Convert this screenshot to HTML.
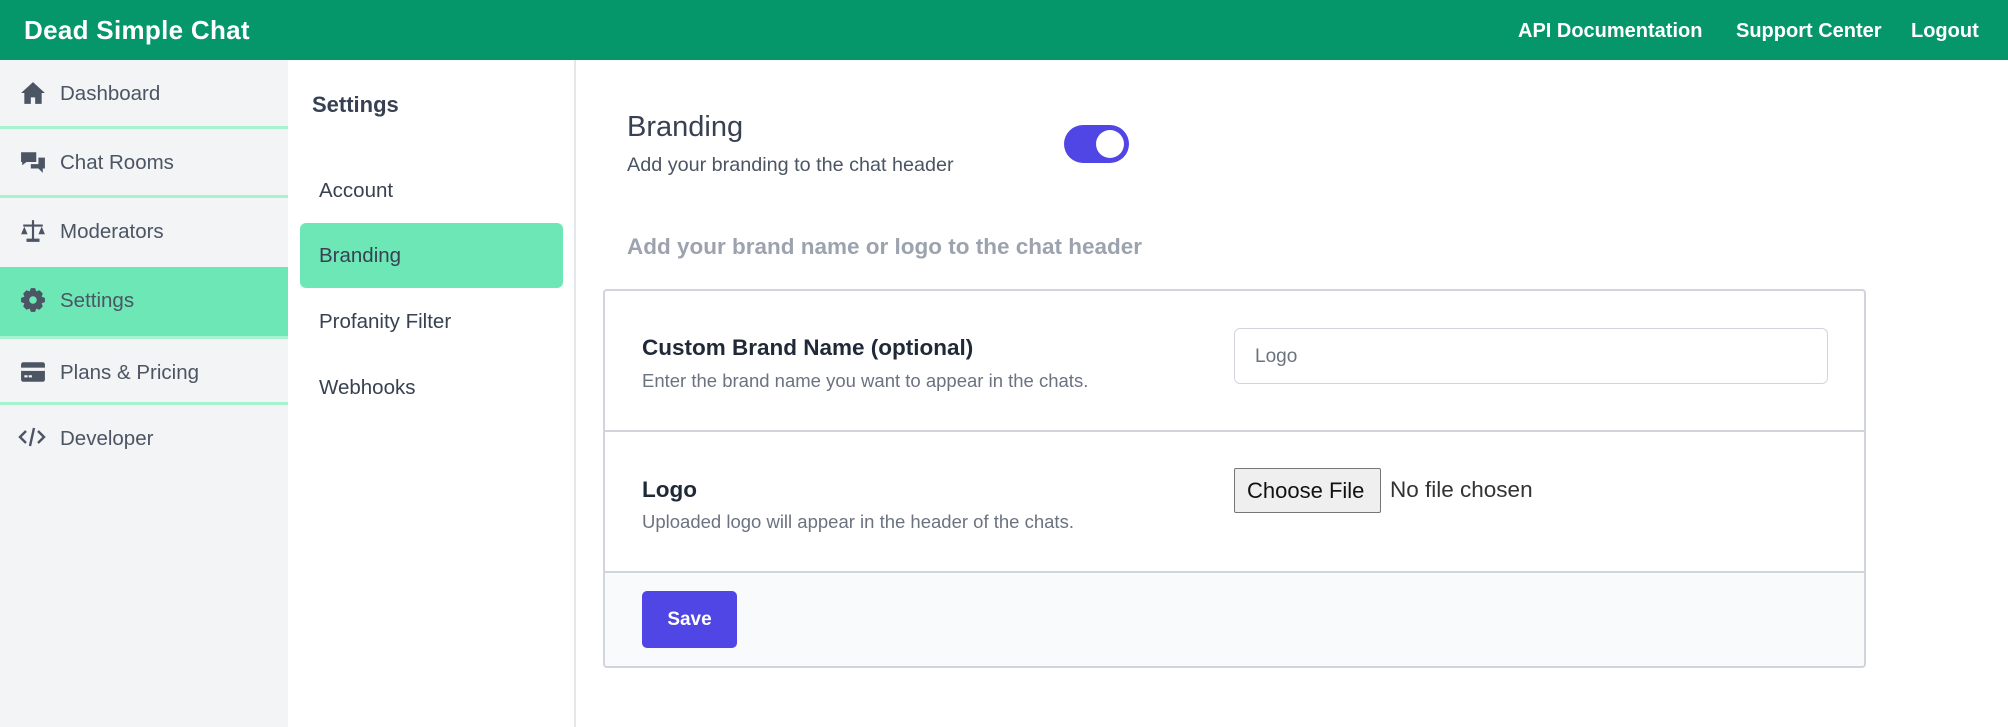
<!DOCTYPE html>
<html><head><meta charset="utf-8"><style>
*{box-sizing:border-box;margin:0;padding:0}
body{width:2008px;height:727px;overflow:hidden;font-family:"Liberation Sans",sans-serif;background:#fff;position:relative;color:#374151}
.hdr{position:absolute;left:0;top:0;width:2008px;height:60px;background:#059669;color:#fff}
.hdr .t{position:absolute;left:24px;top:15px;font-size:26px;font-weight:bold;letter-spacing:0.3px}
.hdr .l{position:absolute;top:20px;font-size:20px;font-weight:bold}
.side{position:absolute;left:0;top:60px;width:288px;height:667px;background:#f3f4f6}
.it{position:absolute;left:0;width:288px;height:66px;font-size:20.5px;color:#4b5563}
.it span{position:absolute;left:60px;top:22px}
.it svg{position:absolute;left:20px;top:20px}
.div{position:absolute;left:0;width:288px;height:3px;background:#a7f3d0}
.col2{position:absolute;left:288px;top:60px;width:288px;height:667px;border-right:2px solid #e5e7eb}
.s{position:absolute;font-size:20.5px;color:#374151}
.abs{position:absolute}
</style></head><body>
<div class="hdr"><div class="t">Dead Simple Chat</div>
<div class="l" style="left:1518px">API Documentation</div>
<div class="l" style="left:1736px">Support Center</div>
<div class="l" style="left:1911px">Logout</div></div>
<div class="side">
<div class="it" style="top:0"><svg width="26" height="26" viewBox="0 0 24 24"><path d="M12 2L1 12h3v10h6v-6h4v6h6V12h3z" fill="#4b5563"/></svg><span>Dashboard</span></div>
<div class="div" style="top:66px"></div>
<div class="it" style="top:69px"><svg width="26" height="26" viewBox="0 0 24 24"><path d="M1 3h14v9H6l-4 3v-3H1z M17 8h6v10h-2v4l-4-4h-7v-4h7z" fill="#4b5563"/></svg><span>Chat Rooms</span></div>
<div class="div" style="top:135px"></div>
<div class="it" style="top:138px"><svg width="26" height="26" viewBox="0 0 24 24"><path d="M11 2h2v17h5v3H6v-3h5z M3 6h18v2H3z M4 8l-3 7h6z M20 8l-3 7h6z" fill="#4b5563"/></svg><span>Moderators</span></div>
<div class="it" style="top:207px;background:#6ee7b7;height:69px"><svg width="26" height="26" viewBox="0 0 24 24"><path d="M10 1h4l1 3 3-1 3 3-1 3 3 1v4l-3 1 1 3-3 3-3-1-1 3h-4l-1-3-3 1-3-3 1-3-3-1v-4l3-1-1-3 3-3 3 1z" fill="#4b5563"/><circle cx="12" cy="12" r="3.5" fill="#6ee7b7"/></svg><span>Settings</span></div>
<div class="div" style="top:276px"></div>
<div class="it" style="top:279px"><svg width="26" height="26" viewBox="0 0 24 24"><rect x="1" y="3" width="22" height="18" rx="2" fill="#4b5563"/><rect x="1" y="8" width="22" height="3" fill="#f3f4f6"/><rect x="4" y="15" width="3" height="2" fill="#f3f4f6"/><rect x="8" y="15" width="3" height="2" fill="#f3f4f6"/></svg><span>Plans &amp; Pricing</span></div>
<div class="div" style="top:342px"></div>
<div class="it" style="top:345px"><svg width="28" height="24" viewBox="0 0 28 24" style="left:18px"><path d="M8 6L2 12l6 6M20 6l6 6-6 6M16 3l-4 18" stroke="#4b5563" stroke-width="2.4" fill="none"/></svg><span>Developer</span></div>
</div>
<div class="col2">
<div class="s" style="left:24px;top:32px;font-weight:bold;font-size:22px">Settings</div>
<div class="s" style="left:31px;top:119px">Account</div>
<div class="abs" style="left:12px;top:163px;width:263px;height:65px;background:#6ee7b7;border-radius:6px"></div>
<div class="s" style="left:31px;top:184px">Branding</div>
<div class="s" style="left:31px;top:250px">Profanity Filter</div>
<div class="s" style="left:31px;top:316px">Webhooks</div>
</div>
<div class="abs" style="left:627px;top:111px;font-size:29px;color:#374151">Branding</div>
<div class="abs" style="left:627px;top:154px;font-size:19.8px;color:#4b5563">Add your branding to the chat header</div>
<div class="abs" style="left:1064px;top:125px;width:65px;height:38px;border-radius:19px;background:#4f46e5"><div class="abs" style="left:32px;top:5px;width:28px;height:28px;border-radius:50%;background:#fff"></div></div>
<div class="abs" style="left:627px;top:234px;font-size:22.5px;font-weight:bold;color:#9ca3af">Add your brand name or logo to the chat header</div>
<div class="abs" style="left:603px;top:289px;width:1263px;height:379px;border:2px solid #d1d5db;border-radius:4px;overflow:hidden">
<div class="abs" style="left:0;top:139px;width:100%;height:2px;background:#d1d5db"></div>
<div class="abs" style="left:0;top:280px;width:100%;height:2px;background:#d1d5db"></div>
<div class="abs" style="left:0;top:282px;width:100%;height:95px;background:#f9fafb"></div>
<div class="abs" style="left:37px;top:44px;font-size:22.5px;font-weight:bold;color:#1f2937">Custom Brand Name (optional)</div>
<div class="abs" style="left:37px;top:79px;font-size:18.5px;color:#6b7280">Enter the brand name you want to appear in the chats.</div>
<div class="abs" style="left:629px;top:37px;width:594px;height:56px;border:1px solid #d1d5db;border-radius:6px;background:#fff"><span class="abs" style="left:20px;top:17px;font-size:19px;color:#6b7280">Logo</span></div>
<div class="abs" style="left:37px;top:186px;font-size:22.5px;font-weight:bold;color:#1f2937">Logo</div>
<div class="abs" style="left:37px;top:220px;font-size:18.5px;color:#6b7280">Uploaded logo will appear in the header of the chats.</div>
<div class="abs" style="left:629px;top:177px;width:147px;height:45px;border:1px solid #767676;border-radius:2px;background:#efefef;font-size:22px;color:#111;padding:9px 0 0 12px">Choose File</div>
<div class="abs" style="left:785px;top:186px;font-size:22.5px;color:#333">No file chosen</div>
<div class="abs" style="left:37px;top:300px;width:95px;height:57px;border-radius:5px;background:#4f46e5;color:#fff;font-size:19px;font-weight:bold;text-align:center;line-height:57px">Save</div>
</div>
</body></html>
